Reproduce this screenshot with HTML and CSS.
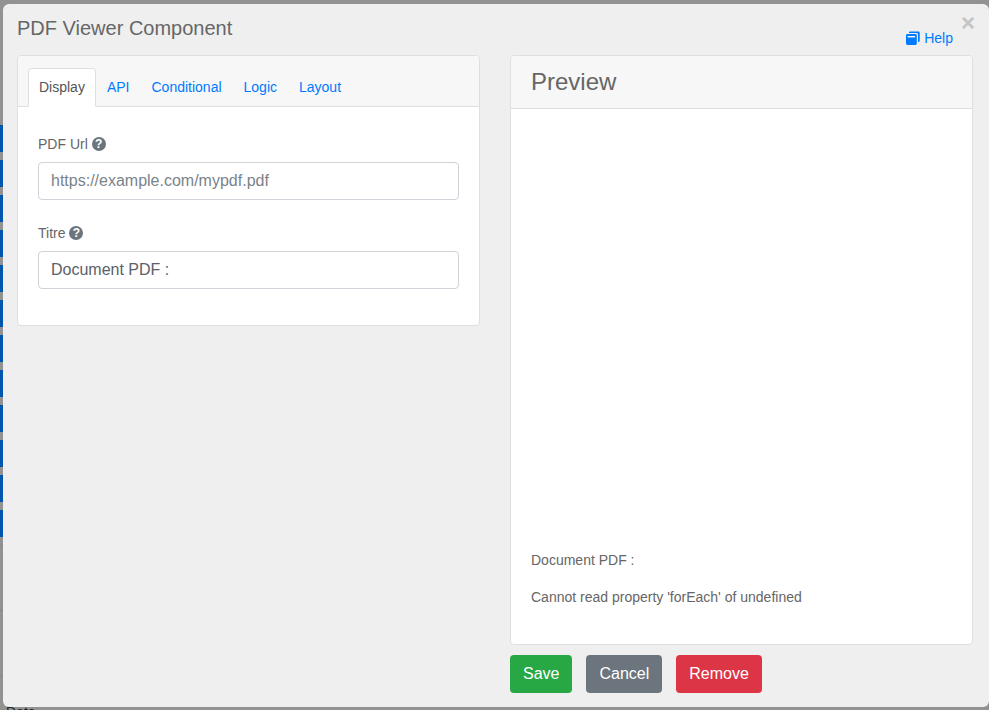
FILE: index.html
```html
<!DOCTYPE html>
<html lang="en">
<head>
    <meta charset="UTF-8">
    <title>PDF Viewer Component</title>
    <link rel="stylesheet" href="styles.css">
</head>
<body>
    <!-- page behind the dialog, only its left edge shows -->
    <div class="behind">
        <div class="behind-top"></div>
        <div class="behind-rows">
            <div class="behind-row"></div>
            <div class="behind-row"></div>
            <div class="behind-row"></div>
            <div class="behind-row"></div>
            <div class="behind-row"></div>
            <div class="behind-row"></div>
            <div class="behind-row"></div>
            <div class="behind-row"></div>
            <div class="behind-row"></div>
            <div class="behind-row"></div>
            <div class="behind-row"></div>
            <div class="behind-row"></div>
        </div>
        <div class="behind-lines">
            <div class="behind-line"></div>
            <div class="behind-line"></div>
            <div class="behind-line"></div>
        </div>
        <div class="behind-data">Data</div>
    </div>

    <div class="dialog">
        <button class="dialog-close" type="button">&times;</button>
        <div class="dialog-head">
            <h3 class="dialog-title">PDF Viewer Component</h3>
            <a class="help-link" href="#">
                <svg class="help-icon" viewBox="0 0 14 14" width="14" height="14">
                    <path fill="#007bff" d="M4 0.5h8.500a1.200 1.200 0 0 1 1.200 1.200v8a1.200 1.200 0 0 1-1.200 1.200h-0.500V3.400A1.400 1.400 0 0 0 10.600 2H3V1.500a1 1 0 0 1 1-1z"/>
                    <path fill="#007bff" d="M1.400 3h8a1.400 1.400 0 0 1 1.400 1.400v8.200A1.400 1.400 0 0 1 9.400 14h-8A1.400 1.400 0 0 1 0 12.600V4.400A1.400 1.400 0 0 1 1.400 3z"/>
                    <rect x="1.600" y="5" width="7.500" height="1.400" fill="#ffffff"/>
                </svg>
                Help
            </a>
        </div>

        <div class="dialog-body">
            <div class="col-left">
                <div class="card">
                    <ul class="tabs">
                        <li class="tab active"><a href="#">Display</a></li>
                        <li class="tab"><a href="#">API</a></li>
                        <li class="tab"><a href="#">Conditional</a></li>
                        <li class="tab"><a href="#">Logic</a></li>
                        <li class="tab"><a href="#">Layout</a></li>
                    </ul>
                    <div class="tab-body">
                        <div class="form-group">
                            <label for="url">PDF Url <span class="hint">?</span></label>
                            <input id="url" class="form-control" type="text" placeholder="https://example.com/mypdf.pdf">
                        </div>
                        <div class="form-group">
                            <label for="titre">Titre <span class="hint">?</span></label>
                            <input id="titre" class="form-control" type="text" value="Document PDF :">
                        </div>
                    </div>
                </div>
            </div>

            <div class="col-right">
                <div class="card preview">
                    <div class="preview-head">Preview</div>
                    <div class="preview-body">
                        <p class="preview-label">Document PDF :</p>
                        <p class="preview-error">Cannot read property 'forEach' of undefined</p>
                    </div>
                </div>
                <div class="actions">
                    <button class="btn btn-save" type="button">Save</button>
                    <button class="btn btn-cancel" type="button">Cancel</button>
                    <button class="btn btn-remove" type="button">Remove</button>
                </div>
            </div>
        </div>
    </div>
</body>
</html>
```

FILE: styles.css
```css
* {
    box-sizing: border-box;
}

html, body {
    height: 100%;
}

body {
    margin: 0;
    background-color: #929292;
    font-family: "Liberation Sans", Arial, sans-serif;
    font-size: 14px;
    color: #666;
    overflow: hidden;
}

.behind {
    height: 710px;
}

.behind-top {
    height: 125px;
}

.behind-rows {
    display: flex;
    flex-direction: column;
    gap: 8px;
    width: 3px;
}

.behind-row {
    height: 27px;
    background-color: #0056ad;
}

.behind-lines {
    height: 168px;
    padding-top: 8px;
}

.behind-line {
    height: 1px;
    margin-bottom: 64px;
    background-color: #888;
}

.behind-data {
    padding-left: 6px;
    font-size: 14px;
    line-height: 14px;
    color: #222;
}

.dialog {
    position: absolute;
    top: 4px;
    left: 3px;
    width: 986px;
    height: 703px;
    padding: 0 16px 0 14px;
    background-color: #efefef;
    border-radius: 6px;
}

.dialog-close {
    position: absolute;
    top: 5px;
    right: 14px;
    padding: 0;
    border: none;
    background: none;
    font-family: inherit;
    font-size: 24px;
    font-weight: bold;
    line-height: 28px;
    color: #c4c4c4;
}

.dialog-head {
    display: flex;
    justify-content: space-between;
    height: 51px;
}

.dialog-title {
    margin: 12px 0 0;
    font-size: 20px;
    font-weight: normal;
    line-height: 24px;
    color: #666;
}

.help-link {
    margin-top: 26px;
    padding-right: 20px;
    height: 16px;
    line-height: 16px;
    color: #007bff;
    text-decoration: none;
}

.help-icon {
    vertical-align: -2px;
}

.dialog-body {
    display: flex;
    gap: 30px;
}

.col-left {
    width: 463px;
}

.col-right {
    width: 463px;
}

.card {
    background-color: #fff;
    border: 1px solid #dfdfdf;
    border-radius: 4px;
}

.tabs {
    display: flex;
    height: 51px;
    margin: 0;
    padding: 12px 10px 0;
    list-style: none;
    background-color: #f7f7f7;
    border-bottom: 1px solid #dfdfdf;
    border-radius: 4px 4px 0 0;
}

.tab {
    height: 39px;
    border: 1px solid transparent;
    border-radius: 4px 4px 0 0;
}

.tab a {
    display: block;
    padding: 10px 10px 0;
    line-height: 16px;
    color: #007bff;
    text-decoration: none;
}

.tab.active {
    background-color: #fff;
    border-color: #dfdfdf #dfdfdf #fff;
}

.tab.active a {
    color: #555;
}

.tab-body {
    padding: 20px 20px 20px;
}

.form-group {
    margin-bottom: 16px;
}

label {
    display: block;
    height: 35px;
    padding-top: 9px;
    line-height: 16px;
}

.hint {
    display: inline-block;
    width: 14px;
    height: 14px;
    margin-left: 0;
    border-radius: 50%;
    background-color: #6c757d;
    color: #fff;
    font-size: 12px;
    font-weight: bold;
    line-height: 14px;
    text-align: center;
    vertical-align: 1px;
}

.form-control {
    display: block;
    width: 100%;
    height: 38px;
    padding: 6px 12px;
    border: 1px solid #ced4da;
    border-radius: 4px;
    font-family: inherit;
    font-size: 16px;
    color: #5a6168;
}

.form-control::placeholder {
    color: #7b838a;
}

.preview {
    display: flex;
    flex-direction: column;
    height: 590px;
}

.preview-head {
    height: 53px;
    padding: 12px 20px 0;
    background-color: #f7f7f7;
    border-bottom: 1px solid #dfdfdf;
    border-radius: 4px 4px 0 0;
    font-size: 24px;
    line-height: 28px;
    color: #666;
}

.preview-body {
    flex: 1;
    padding: 443px 20px 0;
}

.preview-body p {
    margin: 0 0 21px;
    line-height: 16px;
}

.actions {
    display: flex;
    gap: 14px;
    margin-top: 10px;
}

.btn {
    height: 38px;
    padding: 0 13px;
    border: none;
    border-radius: 4px;
    font-family: inherit;
    font-size: 16px;
    color: #fff;
}

.btn-save {
    background-color: #28a745;
}

.btn-cancel {
    background-color: #6c757d;
}

.btn-remove {
    background-color: #dc3545;
}
```
